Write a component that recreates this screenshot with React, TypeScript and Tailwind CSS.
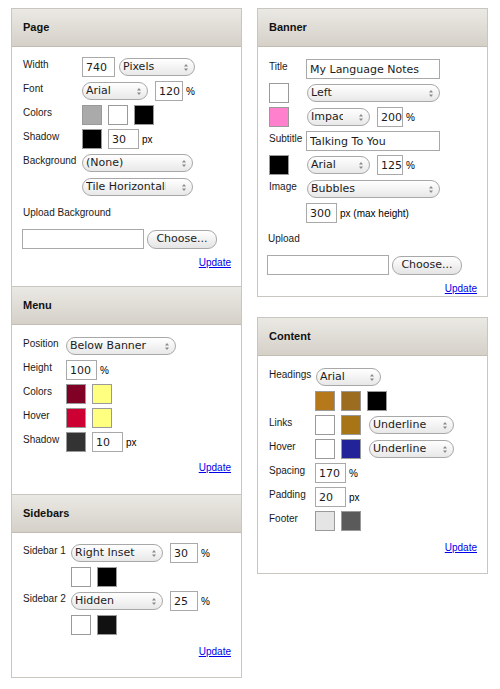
import type { ReactNode } from "react";

const ctl = "font-['DejaVu_Sans',sans-serif] text-[11px] text-[#1c1c1c]";

function UpDown() {
  return (
    <svg width="4" height="7" viewBox="0 0 4 7" className="shrink-0">
      <path d="M0 2.6 L2 0 L4 2.6 Z M0 4.4 L2 7 L4 4.4 Z" fill="#8a8a8a" />
    </svg>
  );
}

function Select({ className, value }: { className: string; value: string }) {
  return (
    <div
      className={`${className} h-[18px] shrink-0 flex items-center rounded-[9px] border border-[#a8a8a8] bg-linear-to-b from-white to-[#e8e8e8] pl-[3px] pr-[6px] ${ctl}`}
    >
      <span className="flex-1 mr-[16px] overflow-hidden whitespace-nowrap leading-[16px]">{value}</span>
      <UpDown />
    </div>
  );
}

function Field({ className, value }: { className: string; value: string }) {
  return (
    <input
      readOnly
      defaultValue={value}
      className={`${className} h-[20px] shrink-0 border border-[#a9a9a9] bg-white pl-[3px] outline-none ${ctl}`}
    />
  );
}

function Swatch({ className }: { className: string }) {
  return <div className={`${className} w-[20px] h-[20px] shrink-0 border border-[#9a9a9a]`} />;
}

function Unit({ children }: { children: ReactNode }) {
  return <span className="ml-[3px] text-[10px] text-black">{children}</span>;
}

function Row({ label, lw, children }: { label?: ReactNode; lw: string; children?: ReactNode }) {
  return (
    <div className="flex items-center h-[20px]">
      <div className={`${lw} shrink-0 flex items-center`}>
        {typeof label === "string" ? (
          <span className="mb-[4px] text-[10px] leading-[12px] text-[#1a1a1a]">{label}</span>
        ) : (
          label
        )}
      </div>
      <div className="flex items-center">{children}</div>
    </div>
  );
}

function Panel({ title, className, bodyClass, children }: { title: string; className: string; bodyClass: string; children: ReactNode }) {
  return (
    <div className={`${className} w-[231px] shrink-0 border border-[#c9c6bf] bg-white flex flex-col`}>
      <div className="h-[38px] shrink-0 flex items-center pl-[11px] border-b border-[#c2bdb3] bg-linear-to-b from-[#ebe9e4] to-[#d5d1c9] text-[11px] font-bold text-[#111]">
        {title}
      </div>
      <div className={`${bodyClass} pl-[11px] pr-[10px] flex flex-col`}>{children}</div>
    </div>
  );
}

function Update({ className }: { className: string }) {
  return (
    <div className={`${className} flex justify-end`}>
      <a href="#" className="text-[10px] leading-[14px] text-[#0000ee] underline">
        Update
      </a>
    </div>
  );
}

function Upload({ className }: { className: string }) {
  return (
    <div className={`${className} flex items-center h-[20px]`}>
      <input readOnly className="w-[122px] h-[20px] border border-[#a9a9a9] bg-white" />
      <button className={`ml-[3px] w-[70px] h-[19px] rounded-[9px] border border-[#a8a8a8] bg-linear-to-b from-white to-[#e4e4e4] ${ctl} text-[11.5px] text-[#222]`}>
        Choose...
      </button>
    </div>
  );
}

export default function App() {
  return (
    <div className="w-[500px] h-[689px] bg-white flex gap-[15px] pl-[11px] pt-[8px] font-['Liberation_Sans',Arial,sans-serif]">
      {/* left column */}
      <div className="flex flex-col">
        <Panel title="Page" className="h-[279px]" bodyClass="pt-[10px]">
          <div className="flex flex-col gap-[4px]">
            <Row label="Width" lw="w-[59px]">
              <Field className="w-[33px]" value="740" />
              <Select className="ml-[4px] w-[76px]" value="Pixels" />
            </Row>
            <Row label="Font" lw="w-[59px]">
              <Select className="w-[66px]" value="Arial" />
              <Field className="ml-[7px] w-[28px]" value="120" />
              <Unit>%</Unit>
            </Row>
            <Row label="Colors" lw="w-[59px]">
              <Swatch className="bg-[#aaaaaa]" />
              <Swatch className="ml-[6px] bg-white" />
              <Swatch className="ml-[6px] bg-black" />
            </Row>
            <Row label="Shadow" lw="w-[59px]">
              <Swatch className="bg-black" />
              <Field className="ml-[6px] w-[31px]" value="30" />
              <Unit>px</Unit>
            </Row>
            <Row label="Background" lw="w-[59px]">
              <Select className="w-[111px]" value="(None)" />
            </Row>
            <Row lw="w-[59px]">
              <Select className="w-[111px]" value="Tile Horizontally" />
            </Row>
          </div>
          <div className="mt-[9px] text-[10px] leading-[14px] text-[#1a1a1a]">Upload Background</div>
          <Upload className="mt-[9px] -ml-[1px]" />
          <Update className="mt-[7px]" />
        </Panel>

        <Panel title="Menu" className="-mt-px h-[209px]" bodyClass="pt-[11px]">
          <div className="flex flex-col gap-[4px]">
            <Row label="Position" lw="w-[43px]">
              <Select className="w-[110px]" value="Below Banner" />
            </Row>
            <Row label="Height" lw="w-[43px]">
              <Field className="w-[31px]" value="100" />
              <Unit>%</Unit>
            </Row>
            <Row label="Colors" lw="w-[43px]">
              <Swatch className="bg-[#800026]" />
              <Swatch className="ml-[6px] bg-[#ffff80]" />
            </Row>
            <Row label="Hover" lw="w-[43px]">
              <Swatch className="bg-[#cc0033]" />
              <Swatch className="ml-[6px] bg-[#ffff80]" />
            </Row>
            <Row label="Shadow" lw="w-[43px]">
              <Swatch className="bg-[#333333]" />
              <Field className="ml-[6px] w-[31px]" value="10" />
              <Unit>px</Unit>
            </Row>
          </div>
          <Update className="mt-[9px]" />
        </Panel>

        <Panel title="Sidebars" className="-mt-px h-[184px]" bodyClass="pt-[10px]">
          <div className="flex flex-col gap-[4px]">
            <Row label="Sidebar 1" lw="w-[48px]">
              <Select className="w-[92px]" value="Right Inset" />
              <Field className="ml-[7px] w-[28px]" value="30" />
              <Unit>%</Unit>
            </Row>
            <Row lw="w-[48px]">
              <Swatch className="bg-white" />
              <Swatch className="ml-[6px] bg-black" />
            </Row>
            <Row label="Sidebar 2" lw="w-[48px]">
              <Select className="w-[92px]" value="Hidden" />
              <Field className="ml-[7px] w-[28px]" value="25" />
              <Unit>%</Unit>
            </Row>
            <Row lw="w-[48px]">
              <Swatch className="bg-white" />
              <Swatch className="ml-[6px] bg-[#111111]" />
            </Row>
          </div>
          <Update className="mt-[10px]" />
        </Panel>
      </div>

      {/* right column */}
      <div className="flex flex-col">
        <Panel title="Banner" className="h-[289px]" bodyClass="pt-[12px]">
          <div className="flex flex-col gap-[4px]">
            <Row label="Title" lw="w-[37px]">
              <Field className="w-[134px]" value="My Language Notes" />
            </Row>
            <Row label={<Swatch className="bg-white" />} lw="w-[37px]">
              <Select className="ml-[1px] w-[133px]" value="Left" />
            </Row>
            <Row label={<Swatch className="bg-[#ff80cc]" />} lw="w-[37px]">
              <Select className="ml-[1px] w-[63px]" value="Impact" />
              <Field className="ml-[7px] w-[26px]" value="200" />
              <Unit>%</Unit>
            </Row>
            <Row label="Subtitle" lw="w-[37px]">
              <Field className="w-[134px]" value="Talking To You" />
            </Row>
            <Row label={<Swatch className="bg-black" />} lw="w-[37px]">
              <Select className="ml-[1px] w-[63px]" value="Arial" />
              <Field className="ml-[7px] w-[26px]" value="125" />
              <Unit>%</Unit>
            </Row>
            <Row label="Image" lw="w-[37px]">
              <Select className="ml-[1px] w-[133px]" value="Bubbles" />
            </Row>
            <Row lw="w-[37px]">
              <Field className="w-[31px]" value="300" />
              <Unit>px (max height)</Unit>
            </Row>
          </div>
          <div className="mt-[9px] -ml-[1px] text-[10px] leading-[14px] text-[#1a1a1a]">Upload</div>
          <Upload className="mt-[9px] -ml-[2px]" />
          <Update className="mt-[7px]" />
        </Panel>

        <Panel title="Content" className="mt-[20px] h-[257px]" bodyClass="pt-[11px]">
          <div className="flex flex-col gap-[4px]">
            <Row label="Headings" lw="w-[46px]">
              <Select className="ml-[1px] w-[65px]" value="Arial" />
            </Row>
            <Row lw="w-[46px]">
              <Swatch className="bg-[#b5781b]" />
              <Swatch className="ml-[6px] bg-[#9c6c20]" />
              <Swatch className="ml-[6px] bg-black" />
            </Row>
            <Row label="Links" lw="w-[46px]">
              <Swatch className="bg-white" />
              <Swatch className="ml-[6px] bg-[#a87516]" />
              <Select className="ml-[8px] w-[85px]" value="Underline" />
            </Row>
            <Row label="Hover" lw="w-[46px]">
              <Swatch className="bg-white" />
              <Swatch className="ml-[6px] bg-[#222299]" />
              <Select className="ml-[8px] w-[85px]" value="Underline" />
            </Row>
            <Row label="Spacing" lw="w-[46px]">
              <Field className="w-[31px]" value="170" />
              <Unit>%</Unit>
            </Row>
            <Row label="Padding" lw="w-[46px]">
              <Field className="w-[31px]" value="20" />
              <Unit>px</Unit>
            </Row>
            <Row label="Footer" lw="w-[46px]">
              <Swatch className="bg-[#e5e5e5]" />
              <Swatch className="ml-[6px] bg-[#5a5a5a]" />
            </Row>
          </div>
          <Update className="mt-[10px]" />
        </Panel>
      </div>
    </div>
  );
}
